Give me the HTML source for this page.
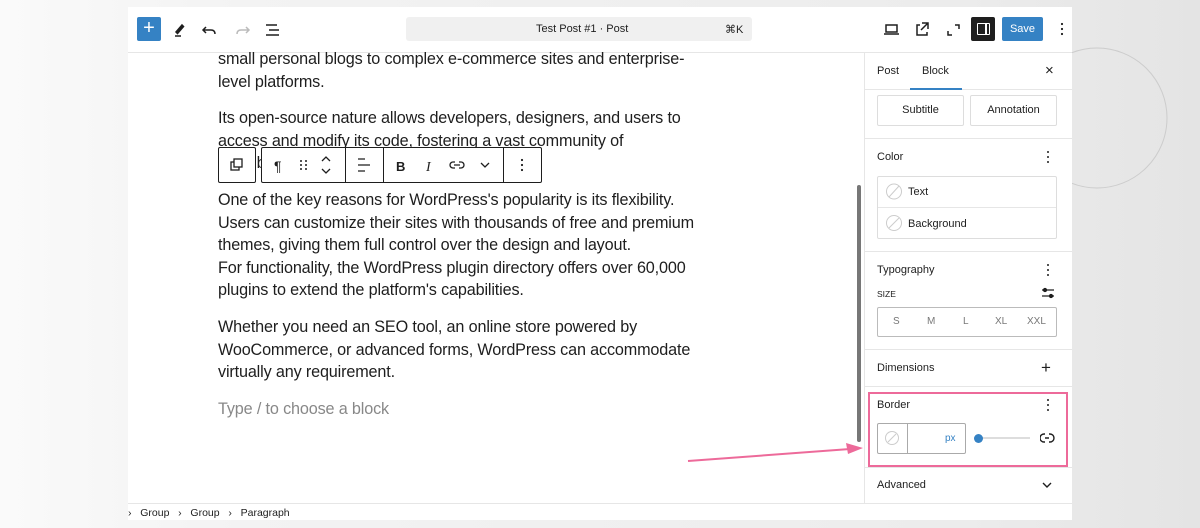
<!DOCTYPE html>
<html><head><style>
*{box-sizing:border-box;margin:0;padding:0}
body{width:1200px;height:528px;overflow:hidden;font-family:"Liberation Sans",sans-serif;background:linear-gradient(90deg,#fafafa 0%,#f3f3f3 20%,#ececec 80%,#e4e4e4 100%);position:relative;color:#1e1e1e}
.abs{position:absolute}
.panel{left:128px;top:7px;width:944px;height:513px;background:#fff}
.t{font-size:16.2px;color:#1e1e1e;left:218px;line-height:22.5px;letter-spacing:-0.15px}
.s{font-size:11px;color:#1e1e1e}
.line{background:#e6e6e6}
</style></head><body>
<svg class="abs" style="left:0;top:0" width="1200" height="528"><circle cx="1097" cy="118" r="70" fill="none" stroke="#ccc" stroke-width="1"/></svg>
<div class="abs panel"></div>
<div class="abs line" style="left:128px;top:52px;width:944px;height:1px"></div>
<div class="abs" style="left:137px;top:17px;width:24px;height:24px;background:#3582c4;border-radius:2px;color:#fff;font-size:20px;line-height:23px;text-align:center">+</div>
<svg class="abs" style="left:170px;top:19px" width="140" height="22" fill="none" stroke="#1e1e1e" stroke-width="1.5">
<path d="M6 13 L12 6 L13.5 7.5 L7.5 14.5 Z" fill="#1e1e1e"/><path d="M5 17h6"/>
<path d="M36 8 L33 11 L36 14 M33 11 H41 Q45 11 45 15"/>
<path d="M76 8 L79 11 L76 14 M79 11 H71 Q67 11 67 15" stroke="#bbb"/>
<path d="M96 6h11M99 11h10M96 16h13"/>
</svg>
<div class="abs" style="left:406px;top:17px;width:346px;height:24px;background:#f0f0f0;border-radius:3px"></div>
<div class="abs s" style="left:536px;top:23px">Test Post #1 · Post</div>
<div class="abs s" style="left:725px;top:23px">⌘K</div>
<svg class="abs" style="left:880px;top:17px" width="100" height="26" fill="none" stroke="#1e1e1e" stroke-width="1.5">
<rect x="6" y="8" width="11" height="7"/><path d="M4 17h15"/>
<path d="M40 8h-3v10h10v-3M42 6h6v6M48 6l-7 7"/>
<path d="M68 14v4h4M79 12V8h-4"/>
</svg>
<div class="abs" style="left:971px;top:17px;width:24px;height:24px;background:#1e1e1e;border-radius:2px"></div>
<div class="abs" style="left:977px;top:23px;width:13px;height:12px;border:1.5px solid #fff;border-radius:1px"></div>
<div class="abs" style="left:985px;top:23px;width:1.5px;height:12px;background:#fff"></div>
<div class="abs" style="left:1002px;top:17px;width:41px;height:24px;background:#3582c4;border-radius:2px;color:#fff;font-size:11px;line-height:24px;text-align:center">Save</div>
<svg class="abs" style="left:1058px;top:20px" width="8" height="20" fill="#1e1e1e"><circle cx="4" cy="4" r="1.1"/><circle cx="4" cy="9" r="1.1"/><circle cx="4" cy="14" r="1.1"/></svg>
<div class="abs t" style="top:48px">small personal blogs to complex e-commerce sites and enterprise-<br>level platforms.</div>
<div class="abs t" style="top:107px">Its open-source nature allows developers, designers, and users to<br>access and modify its code, fostering a vast community of<br>contributors and users around the platform.</div>
<div class="abs t" style="top:189px">One of the key reasons for WordPress's popularity is its flexibility.<br>Users can customize their sites with thousands of free and premium<br>themes, giving them full control over the design and layout.<br>For functionality, the WordPress plugin directory offers over 60,000<br>plugins to extend the platform's capabilities.</div>
<div class="abs t" style="top:316px">Whether you need an SEO tool, an online store powered by<br>WooCommerce, or advanced forms, WordPress can accommodate<br>virtually any requirement.</div>
<div class="abs t" style="top:398px;color:#888">Type / to choose a block</div>
<div class="abs" style="left:218px;top:147px;width:38px;height:36px;background:#fff;border:1px solid #1e1e1e;border-radius:2px"></div>
<div class="abs" style="left:261px;top:147px;width:281px;height:36px;background:#fff;border:1px solid #1e1e1e;border-radius:2px"></div>
<div class="abs" style="left:345px;top:147px;width:1px;height:36px;background:#1e1e1e"></div>
<div class="abs" style="left:383px;top:147px;width:1px;height:36px;background:#1e1e1e"></div>
<div class="abs" style="left:503px;top:147px;width:1px;height:36px;background:#1e1e1e"></div>
<svg class="abs" style="left:218px;top:147px" width="324" height="36" fill="none" stroke="#1e1e1e" stroke-width="1.3">
<rect x="13" y="15" width="8" height="8"/><rect x="16" y="12" width="8" height="8" fill="#fff"/>
<text x="56" y="24" font-size="14" fill="#1e1e1e" stroke="none" font-family="Liberation Sans">¶</text>
<g fill="#1e1e1e" stroke="none"><circle cx="83" cy="14" r="1"/><circle cx="88" cy="14" r="1"/><circle cx="83" cy="18" r="1"/><circle cx="88" cy="18" r="1"/><circle cx="83" cy="22" r="1"/><circle cx="88" cy="22" r="1"/></g>
<path d="M104 14l4-4 4 4M104 22l4 4 4-4"/>
<path d="M140 12h7M140 18h12M140 24h7"/>
<text x="178" y="24" font-size="13" font-weight="bold" fill="#1e1e1e" stroke="none" font-family="Liberation Sans">B</text>
<text x="208" y="24" font-size="14" font-style="italic" fill="#1e1e1e" stroke="none" font-family="Liberation Serif">I</text>
<path d="M237 15h-2a3 3 0 000 6h2M241 15h2a3 3 0 010 6h-2M236 18h6"/>
<path d="M263 16l4 4 4-4"/>
<g fill="#1e1e1e" stroke="none"><circle cx="304" cy="13" r="1.1"/><circle cx="304" cy="18" r="1.1"/><circle cx="304" cy="23" r="1.1"/></g>
</svg>
<div class="abs" style="left:857px;top:185px;width:4px;height:257px;background:#777;border-radius:2px"></div>
<div class="abs line" style="left:864px;top:53px;width:1px;height:450px"></div>
<div class="abs s" style="left:877px;top:65px">Post</div>
<div class="abs s" style="left:922px;top:65px">Block</div>
<div class="abs" style="left:1045px;top:62px;font-size:15px">×</div>
<div class="abs line" style="left:865px;top:89px;width:207px;height:1px"></div>
<div class="abs" style="left:910px;top:88px;width:52px;height:1.5px;background:#3582c4"></div>
<div class="abs" style="left:877px;top:95px;width:87px;height:31px;border:1px solid #ddd;border-radius:2px;font-size:11px;text-align:center;line-height:29px">Subtitle</div>
<div class="abs" style="left:970px;top:95px;width:87px;height:31px;border:1px solid #ddd;border-radius:2px;font-size:11px;text-align:center;line-height:29px">Annotation</div>
<div class="abs line" style="left:865px;top:138px;width:207px;height:1px"></div>
<div class="abs s" style="left:877px;top:151px">Color</div>
<div class="abs" style="left:877px;top:176px;width:180px;height:63px;border:1px solid #ddd;border-radius:2px"></div>
<div class="abs line" style="left:878px;top:207px;width:178px;height:1px"></div>
<svg class="abs" style="left:885px;top:182px" width="20" height="52" fill="none" stroke="#ccc"><circle cx="9" cy="9.5" r="7.5"/><path d="M4 15L14 4"/><circle cx="9" cy="41" r="7.5"/><path d="M4 46L14 36"/></svg>
<div class="abs s" style="left:908px;top:186px">Text</div>
<div class="abs s" style="left:908px;top:218px">Background</div>
<div class="abs line" style="left:865px;top:251px;width:207px;height:1px"></div>
<div class="abs s" style="left:877px;top:264px">Typography</div>
<div class="abs" style="left:877px;top:289px;font-size:8.5px">SIZE</div>
<svg class="abs" style="left:1040px;top:286px" width="16" height="14" stroke="#1e1e1e" stroke-width="1.3"><path d="M2 4h12M2 10h12"/><circle cx="5" cy="4" r="1.5" fill="#1e1e1e"/><circle cx="11" cy="10" r="1.5" fill="#1e1e1e"/></svg>
<div class="abs" style="left:877px;top:307px;width:180px;height:30px;border:1px solid #bbb;border-radius:2px"></div>
<div class="abs" style="left:893px;top:316px;font-size:10px;color:#777">S</div>
<div class="abs" style="left:927px;top:316px;font-size:10px;color:#777">M</div>
<div class="abs" style="left:963px;top:316px;font-size:10px;color:#777">L</div>
<div class="abs" style="left:995px;top:316px;font-size:10px;color:#777">XL</div>
<div class="abs" style="left:1027px;top:316px;font-size:10px;color:#777">XXL</div>
<div class="abs line" style="left:865px;top:349px;width:207px;height:1px"></div>
<div class="abs s" style="left:877px;top:362px">Dimensions</div>
<div class="abs" style="left:1041px;top:358px;font-size:17px">+</div>
<div class="abs line" style="left:865px;top:386px;width:207px;height:1px"></div>
<div class="abs" style="left:868px;top:392px;width:200px;height:75px;border:2px solid #ed6a9a"></div>
<div class="abs s" style="left:877px;top:399px">Border</div>
<div class="abs" style="left:877px;top:423px;width:89px;height:31px;border:1px solid #aaa;border-radius:2px"></div>
<div class="abs" style="left:907px;top:423px;width:1px;height:31px;background:#aaa"></div>
<svg class="abs" style="left:884px;top:430px" width="16" height="16" fill="none" stroke="#ccc"><circle cx="8" cy="8" r="6.5"/><path d="M4 12L12 4"/></svg>
<div class="abs" style="left:945px;top:433px;font-size:10px;color:#3582c4">px</div>
<div class="abs" style="left:978px;top:437px;width:52px;height:2px;background:#ddd"></div>
<div class="abs" style="left:974px;top:434px;width:9px;height:9px;border-radius:50%;background:#3582c4"></div>
<svg class="abs" style="left:1040px;top:432px" width="16" height="12" fill="none" stroke="#1e1e1e" stroke-width="1.4"><path d="M5 2H4a4 4 0 000 8h1M9 2h1a4 4 0 010 8H9M5 6h4"/></svg>
<div class="abs line" style="left:865px;top:467px;width:207px;height:1px"></div>
<div class="abs s" style="left:877px;top:479px">Advanced</div>
<svg class="abs" style="left:1041px;top:480px" width="12" height="10" fill="none" stroke="#1e1e1e" stroke-width="1.4"><path d="M2 3l4 4 4-4"/></svg>
<svg class="abs" style="left:1044px;top:148px" width="8" height="320" fill="#1e1e1e">
<circle cx="4" cy="4" r="1" /><circle cx="4" cy="9" r="1"/><circle cx="4" cy="14" r="1"/>
<circle cx="4" cy="117" r="1"/><circle cx="4" cy="122" r="1"/><circle cx="4" cy="127" r="1"/>
<circle cx="4" cy="252" r="1"/><circle cx="4" cy="257" r="1"/><circle cx="4" cy="262" r="1"/>
</svg>
<div class="abs line" style="left:128px;top:503px;width:944px;height:1px"></div>
<div class="abs" style="left:128px;top:507px;font-size:10.5px;color:#1e1e1e;white-space:pre">›   Group   ›   Group   ›   Paragraph</div>
<svg class="abs" style="left:0;top:0" width="1200" height="528"><path d="M688 461 L850 449" stroke="#ed6a9a" stroke-width="2"/><path d="M863 448 L846 443 L848 454 Z" fill="#ed6a9a"/></svg>
</body></html>
